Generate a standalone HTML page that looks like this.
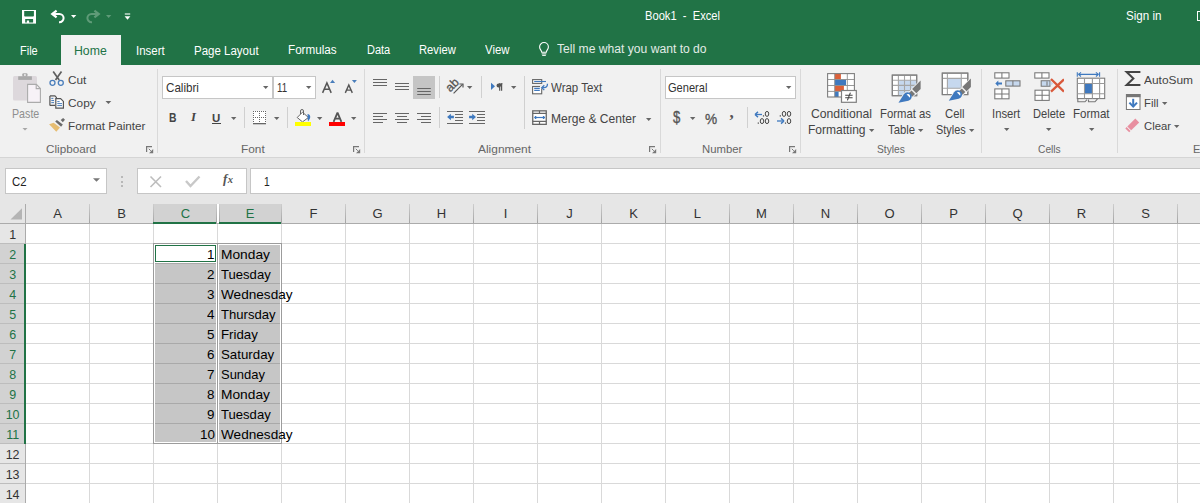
<!DOCTYPE html>
<html><head><meta charset="utf-8"><style>
html,body{margin:0;padding:0;width:1200px;height:503px;overflow:hidden;background:#fff}
body{position:relative;font-family:"Liberation Sans",sans-serif}
div,span,svg{position:absolute}
.t{white-space:pre;transform-origin:0 0;line-height:normal}
.hd{font-size:12.5px;line-height:16px}
.cell{font-size:13.5px;line-height:18px;color:#000}
</style></head><body>
<div style="left:0px;top:0px;width:1200px;height:65px;background:#217346"></div>
<div style="left:61px;top:35px;width:60px;height:30px;background:#f1f1f1"></div>
<span class="t" style="left:644.60px;top:8.20px;font-size:13.04px;color:#ffffff;transform:scaleX(0.8552)">Book1  -  Excel</span>
<span class="t" style="left:1126.10px;top:8.20px;font-size:13.04px;color:#ffffff;transform:scaleX(0.8897)">Sign in</span>
<span class="t" style="left:20.40px;top:43.89px;font-size:12.61px;color:#ffffff;transform:scaleX(0.8719)">File</span>
<span class="t" style="left:74.20px;top:43.89px;font-size:12.61px;color:#217346;transform:scaleX(0.9732)">Home</span>
<span class="t" style="left:136.00px;top:43.89px;font-size:12.61px;color:#ffffff;transform:scaleX(0.9079)">Insert</span>
<span class="t" style="left:194.40px;top:43.89px;font-size:12.61px;color:#ffffff;transform:scaleX(0.9124)">Page Layout</span>
<span class="t" style="left:288.30px;top:42.79px;font-size:12.61px;color:#ffffff;transform:scaleX(0.9257)">Formulas</span>
<span class="t" style="left:366.50px;top:42.79px;font-size:12.61px;color:#ffffff;transform:scaleX(0.8727)">Data</span>
<span class="t" style="left:419.20px;top:42.79px;font-size:12.61px;color:#ffffff;transform:scaleX(0.8889)">Review</span>
<span class="t" style="left:485.20px;top:42.79px;font-size:12.61px;color:#ffffff;transform:scaleX(0.9044)">View</span>
<span class="t" style="left:556.90px;top:42.29px;font-size:12.61px;color:#e3ece6;transform:scaleX(0.9614)">Tell me what you want to do</span>
<div style="left:0px;top:65px;width:1200px;height:92px;background:#f1f1f1"></div>
<div style="left:0px;top:157px;width:1200px;height:1px;background:#d5d5d5"></div>
<div style="left:157px;top:69px;width:1px;height:84px;background:#d9d9d9"></div>
<div style="left:364px;top:69px;width:1px;height:84px;background:#d9d9d9"></div>
<div style="left:660px;top:69px;width:1px;height:84px;background:#d9d9d9"></div>
<div style="left:800px;top:69px;width:1px;height:84px;background:#d9d9d9"></div>
<div style="left:981px;top:69px;width:1px;height:84px;background:#d9d9d9"></div>
<div style="left:1117px;top:69px;width:1px;height:84px;background:#d9d9d9"></div>
<svg style="position:absolute;left:20px;top:8px" width="18" height="18" viewBox="0 0 18 18"><rect x="2" y="2" width="14" height="13.6" fill="#fff"/><path d="M4.2 3 H13.9 V7.9 L13.2 8.5 H4.9 L4.2 7.9 Z" fill="#217346"/><path d="M5.2 10.9 H13.1 V14.6 H9.1 V12.5 H6.8 V14.6 H5.2 Z" fill="#217346"/></svg>
<svg style="position:absolute;left:48px;top:8px" width="20" height="18" viewBox="0 0 20 18"><path d="M4.2 5.9 H11.4 A4.2 4.2 0 0 1 11.4 14.3 H11" fill="none" stroke="#fff" stroke-width="2"/><path d="M8.6 2.6 L4.3 5.9 L8.6 9.3" fill="none" stroke="#fff" stroke-width="2.3"/></svg>
<svg style="position:absolute;left:68px;top:12px" width="10" height="8" viewBox="0 0 10 8"><path d="M3 3 H8.3 L5.65 6 Z" fill="#fff"/></svg>
<svg style="position:absolute;left:84px;top:8px" width="20" height="18" viewBox="0 0 20 18"><g transform="translate(19,0) scale(-1,1)"><path d="M4.2 5.9 H11.4 A4.2 4.2 0 0 1 11.4 14.3 H11" fill="none" stroke="#5f9b78" stroke-width="2"/><path d="M8.6 2.6 L4.3 5.9 L8.6 9.3" fill="none" stroke="#5f9b78" stroke-width="2.3"/></g></svg>
<svg style="position:absolute;left:104px;top:12px" width="10" height="8" viewBox="0 0 10 8"><path d="M2 3 H7.3 L4.65 6 Z" fill="#5f9b78"/></svg>
<svg style="position:absolute;left:122px;top:10px" width="12" height="12" viewBox="0 0 12 12"><path d="M2.8 4 H8.2" stroke="#fff" stroke-width="1.1"/><path d="M2.6 6.3 H8.4 L5.5 9.8 Z" fill="#fff"/></svg>
<div style="left:1197px;top:11px;width:3px;height:10px;border-left:1.2px solid #fff;border-top:1.2px solid #fff;border-bottom:1.2px solid #fff;box-sizing:border-box"></div>
<svg style="position:absolute;left:537px;top:40.5px" width="14" height="18" viewBox="0 0 14 18"><path d="M4.7 11.2 C4.7 9.6 2.6 8.4 2.6 5.9 A4.4 4.4 0 0 1 11.4 5.9 C11.4 8.4 9.3 9.6 9.3 11.2 Z" fill="none" stroke="#fff" stroke-width="1.1"/><path d="M4.7 12.9 H9.3 M5.2 14.4 H8.8" stroke="#fff" stroke-width="1"/></svg>
<svg style="position:absolute;left:10px;top:70px" width="34" height="36" viewBox="0 0 34 36"><rect x="3" y="6" width="24" height="24.6" rx="1.6" fill="#ddd8dc"/><rect x="8.2" y="6.3" width="13.7" height="3.6" fill="#a9a9a9"/><rect x="12.3" y="3.2" width="5.2" height="3.5" rx="1" fill="#a9a9a9"/><rect x="14" y="4.2" width="1.8" height="1.6" fill="#eee"/><path d="M17 13.9 H26.8 L31 18.2 V33 H17 Z" fill="#f1f1f1"/><path d="M17.6 14.4 H26.4 L30.4 18.5 V32.4 H17.6 Z" fill="#f7f2f7" stroke="#ababab" stroke-width="1.1"/><path d="M26.2 14.4 V18.6 H30.4" fill="none" stroke="#ababab" stroke-width="1.1"/></svg>
<svg style="position:absolute;left:46px;top:68px" width="20" height="20" viewBox="0 0 20 20"><path d="M7.2 3.4 L13.2 12 M15.5 3.4 L9.5 12" stroke="#606060" stroke-width="1.7"/><circle cx="6.5" cy="14.8" r="2.5" fill="none" stroke="#4a7ebb" stroke-width="1.3"/><circle cx="14.8" cy="14.8" r="2.5" fill="none" stroke="#4a7ebb" stroke-width="1.3"/></svg>
<svg style="position:absolute;left:46px;top:93px" width="20" height="18" viewBox="0 0 20 18"><path d="M3.9 2.9 H8.9 L10.4 4.4 V5.4 M9 12.4 H3.9 Z" fill="none" stroke="#555" stroke-width="1.2"/><path d="M3.9 2.9 V12.4" stroke="#555" stroke-width="1.2"/><path d="M5.3 5.4 H7.3 M5.3 7.5 H8 M5.3 9.6 H8" stroke="#4a7ebb" stroke-width="1"/><path d="M9.8 5.6 H14.6 L17.4 8.4 V15.2 H9.8 Z" fill="#fff" stroke="#555" stroke-width="1.2"/><path d="M11.3 8.6 H13.6 M11.3 10.6 H16 M11.3 12.6 H16" stroke="#4a7ebb" stroke-width="1"/></svg>
<svg style="position:absolute;left:48px;top:116px" width="19" height="18" viewBox="0 0 19 18"><path d="M1.1 8.3 L5.7 6.7 L12 11.6 L8.3 15.7 Z" fill="#e6bd72"/><path d="M7.2 5.4 L8.9 3.9 L14.8 8.5 L13.1 10.7 Z" fill="#6a6a6a"/><path d="M12.7 4.1 L15.1 1.9 L17 3.7 L14.8 6.3 Z" fill="#6a6a6a"/></svg>
<svg style="position:absolute;left:22px;top:126px" width="8" height="6" viewBox="0 0 8 6"><path d="M0.5 2 H5.5 L3 4.5 Z" fill="#a6a6a6"/></svg>
<svg style="position:absolute;left:105px;top:100px" width="8" height="6" viewBox="0 0 8 6"><path d="M0.5 1 H6.3 L3.4 4 Z" fill="#666"/></svg>
<svg style="position:absolute;left:146px;top:146px" width="8" height="8" viewBox="0 0 8 8"><path d="M0.6 6 V0.6 H6" fill="none" stroke="#777" stroke-width="1.2"/><path d="M2.8 2.8 L4.8 4.8" stroke="#777" stroke-width="1"/><path d="M3 7.2 H7.2 V3 Z" fill="#777"/></svg>
<svg style="position:absolute;left:353px;top:146px" width="8" height="8" viewBox="0 0 8 8"><path d="M0.6 6 V0.6 H6" fill="none" stroke="#777" stroke-width="1.2"/><path d="M2.8 2.8 L4.8 4.8" stroke="#777" stroke-width="1"/><path d="M3 7.2 H7.2 V3 Z" fill="#777"/></svg>
<svg style="position:absolute;left:649px;top:146px" width="8" height="8" viewBox="0 0 8 8"><path d="M0.6 6 V0.6 H6" fill="none" stroke="#777" stroke-width="1.2"/><path d="M2.8 2.8 L4.8 4.8" stroke="#777" stroke-width="1"/><path d="M3 7.2 H7.2 V3 Z" fill="#777"/></svg>
<svg style="position:absolute;left:789px;top:146px" width="8" height="8" viewBox="0 0 8 8"><path d="M0.6 6 V0.6 H6" fill="none" stroke="#777" stroke-width="1.2"/><path d="M2.8 2.8 L4.8 4.8" stroke="#777" stroke-width="1"/><path d="M3 7.2 H7.2 V3 Z" fill="#777"/></svg>
<span class="t" style="left:11.70px;top:106.65px;font-size:12.32px;color:#8f8f8f;transform:scaleX(0.8667)">Paste</span>
<span class="t" style="left:68.40px;top:74.21px;font-size:11.59px;color:#444444;transform:scaleX(1.0167)">Cut</span>
<span class="t" style="left:68.40px;top:97.31px;font-size:11.59px;color:#444444;transform:scaleX(1.0221)">Copy</span>
<span class="t" style="left:68.40px;top:120.11px;font-size:11.59px;color:#444444;transform:scaleX(1.0117)">Format Painter</span>
<span class="t" style="left:45.70px;top:142.87px;font-size:11.3px;color:#666666;transform:scaleX(1.0351)">Clipboard</span>
<span class="t" style="left:241.25px;top:142.57px;font-size:11.3px;color:#666666;transform:scaleX(1.0509)">Font</span>
<span class="t" style="left:478.25px;top:142.57px;font-size:11.3px;color:#666666;transform:scaleX(1.0558)">Alignment</span>
<span class="t" style="left:702.40px;top:142.57px;font-size:11.3px;color:#666666;transform:scaleX(1.0025)">Number</span>
<span class="t" style="left:876.60px;top:142.57px;font-size:11.3px;color:#666666;transform:scaleX(0.9058)">Styles</span>
<span class="t" style="left:1037.70px;top:142.67px;font-size:11.3px;color:#666666;transform:scaleX(0.9044)">Cells</span>
<div style="left:162px;top:76px;width:111px;height:23px;background:#fff;border:1px solid #c6c6c6;box-sizing:border-box"></div>
<div style="left:273px;top:76px;width:43px;height:23px;background:#fff;border:1px solid #c6c6c6;box-sizing:border-box"></div>
<span class="t" style="left:165.80px;top:80.33px;font-size:12.9px;color:#333333;transform:scaleX(0.9016)">Calibri</span>
<span class="t" style="left:276.80px;top:80.33px;font-size:12.9px;color:#333333;transform:scaleX(0.7537)">11</span>
<svg style="position:absolute;left:261.8px;top:85px" width="8" height="5" viewBox="0 0 8 5"><path d="M1 1 H6.4 L3.7 4 Z" fill="#666666"/></svg>
<svg style="position:absolute;left:305px;top:85px" width="8" height="5" viewBox="0 0 8 5"><path d="M1 1 H6.4 L3.7 4 Z" fill="#666666"/></svg>
<svg style="position:absolute;left:320px;top:78px" width="40" height="18" viewBox="0 0 40 18"><path d="M2.6 14.9 L6.9 4.9 L11.2 14.9 M4.3 11.2 H9.6" fill="none" stroke="#555" stroke-width="1.5"/><path d="M10 4.9 L12.55 1.8 L15.1 4.9 Z" fill="#4a7ebb"/><path d="M25.3 14.9 L28.8 7 L32.3 14.9 M26.6 12.1 H31" fill="none" stroke="#555" stroke-width="1.4"/><path d="M31.9 2 H36.9 L34.4 5.1 Z" fill="#4a7ebb"/></svg>
<span class="t" style="left:168.60px;top:110.62px;font-size:12.46px;color:#444;font-weight:bold;transform:scaleX(0.8333)">B</span>
<span class="t" style="left:191px;top:110px;font-size:12.8px;font-style:italic;color:#444;font-family:'Liberation Serif',serif;font-weight:bold">I</span>
<span class="t" style="left:212.30px;top:110.58px;font-size:11.74px;color:#444;font-weight:bold;transform:scaleX(0.9765)">U</span>
<div style="left:212px;top:122.5px;width:9px;height:1.3px;background:#444"></div>
<svg style="position:absolute;left:229.8px;top:116px" width="8" height="5" viewBox="0 0 8 5"><path d="M1 1 H6.4 L3.7 4 Z" fill="#666666"/></svg>
<div style="left:244px;top:107px;width:1px;height:21px;background:#d0d0d0"></div>
<svg style="position:absolute;left:248px;top:105px" width="24" height="24" viewBox="0 0 24 24"><rect x="5" y="6" width="13" height="13" fill="#fff"/><rect x="5.0" y="6.0" width="1" height="1" fill="#666"/><rect x="5.0" y="8.0" width="1" height="1" fill="#666"/><rect x="5.0" y="10.0" width="1" height="1" fill="#666"/><rect x="5.0" y="12.0" width="1" height="1" fill="#666"/><rect x="5.0" y="14.0" width="1" height="1" fill="#666"/><rect x="5.0" y="16.0" width="1" height="1" fill="#666"/><rect x="7.0" y="6.0" width="1" height="1" fill="#666"/><rect x="7.0" y="12.0" width="1" height="1" fill="#666"/><rect x="9.0" y="6.0" width="1" height="1" fill="#666"/><rect x="9.0" y="12.0" width="1" height="1" fill="#666"/><rect x="11.0" y="6.0" width="1" height="1" fill="#666"/><rect x="11.0" y="8.0" width="1" height="1" fill="#666"/><rect x="11.0" y="10.0" width="1" height="1" fill="#666"/><rect x="11.0" y="12.0" width="1" height="1" fill="#666"/><rect x="11.0" y="14.0" width="1" height="1" fill="#666"/><rect x="11.0" y="16.0" width="1" height="1" fill="#666"/><rect x="13.0" y="6.0" width="1" height="1" fill="#666"/><rect x="13.0" y="12.0" width="1" height="1" fill="#666"/><rect x="15.0" y="6.0" width="1" height="1" fill="#666"/><rect x="15.0" y="12.0" width="1" height="1" fill="#666"/><rect x="17.0" y="6.0" width="1" height="1" fill="#666"/><rect x="17.0" y="8.0" width="1" height="1" fill="#666"/><rect x="17.0" y="10.0" width="1" height="1" fill="#666"/><rect x="17.0" y="12.0" width="1" height="1" fill="#666"/><rect x="17.0" y="14.0" width="1" height="1" fill="#666"/><rect x="17.0" y="16.0" width="1" height="1" fill="#666"/><rect x="5" y="18" width="13" height="1.3" fill="#666"/></svg>
<svg style="position:absolute;left:272.8px;top:116px" width="8" height="5" viewBox="0 0 8 5"><path d="M1 1 H6.4 L3.7 4 Z" fill="#666666"/></svg>
<div style="left:287px;top:107px;width:1px;height:21px;background:#d0d0d0"></div>
<svg style="position:absolute;left:293px;top:108px" width="20" height="20" viewBox="0 0 20 20"><path d="M4.2 9.5 L9.5 4.2 L15.4 9.5 L9.5 13.9 Z" fill="#fff" stroke="#666" stroke-width="1"/><path d="M7.5 6 V3 A1.2 1.2 0 0 1 10.5 3 V7" fill="none" stroke="#666" stroke-width="1"/><path d="M14.5 6 C17.6 6.5 18.5 9.5 15 13.6 C14.5 11 14.8 8.5 14.5 6 Z" fill="#3f79bf"/><rect x="2" y="14" width="16" height="4" fill="#ffff00"/></svg>
<svg style="position:absolute;left:315.9px;top:116px" width="8" height="5" viewBox="0 0 8 5"><path d="M1 1 H6.4 L3.7 4 Z" fill="#666666"/></svg>
<svg style="position:absolute;left:327px;top:108px" width="20" height="20" viewBox="0 0 20 20"><path d="M6.6 13.9 L10.5 4.6 L14.4 13.9 M8 10.6 H13" fill="none" stroke="#555" stroke-width="1.8" stroke-linejoin="bevel"/><rect x="2" y="14" width="16" height="4" fill="#ff0000"/></svg>
<svg style="position:absolute;left:349.9px;top:116px" width="8" height="5" viewBox="0 0 8 5"><path d="M1 1 H6.4 L3.7 4 Z" fill="#666666"/></svg>
<svg style="position:absolute;left:370px;top:74px" width="70" height="56" viewBox="0 0 70 56"><path d="M3 5.5 H17 M3 8.5 H17 M3 11.5 H17" stroke="#666" stroke-width="1.1"/><path d="M25 9.5 H39 M25 12.5 H39 M25 15.5 H39" stroke="#666" stroke-width="1.1"/><rect x="43" y="2" width="22" height="23" fill="#c5c5c5"/><path d="M47.2 14.5 H60.8 M47.2 17.5 H60.8 M47.2 20.5 H60.8" stroke="#666" stroke-width="1.1"/><path d="M3 39.5 H17 M3 42.5 H13 M3 45.5 H17 M3 48.5 H13" stroke="#666" stroke-width="1.1"/><path d="M25 39.5 H39 M27 42.5 H37 M25 45.5 H39 M27 48.5 H37" stroke="#666" stroke-width="1.1"/><path d="M47 39.5 H61 M51 42.5 H61 M47 45.5 H61 M51 48.5 H61" stroke="#666" stroke-width="1.1"/></svg>
<div style="left:439px;top:76px;width:1px;height:22px;background:#d0d0d0"></div>
<div style="left:439px;top:107px;width:1px;height:21px;background:#d0d0d0"></div>
<div style="left:481px;top:76px;width:1px;height:22px;background:#d0d0d0"></div>
<svg style="position:absolute;left:444px;top:77px" width="22" height="18" viewBox="0 0 22 18"><g transform="rotate(-45 8 8)"><text x="1.5" y="12" font-family="Liberation Sans" font-size="12" fill="#555" stroke="#555" stroke-width="0.35">ab</text></g><path d="M9.6 16.3 L18.5 7.4" stroke="#555" stroke-width="1.2"/><path d="M15.4 7 H19 V10.6" fill="none" stroke="#555" stroke-width="1.2"/></svg>
<svg style="position:absolute;left:466px;top:85px" width="8" height="5" viewBox="0 0 8 5"><path d="M1 1 H6.4 L3.7 4 Z" fill="#666666"/></svg>
<svg style="position:absolute;left:488px;top:80px" width="18" height="14" viewBox="0 0 18 14"><path d="M3 2.8 L7 6.3 L3 9.9 Z" fill="#3f79bf"/><path d="M11.7 3.3 V10.8 M13.6 3.3 V10.8" stroke="#555" stroke-width="1.2"/><path d="M14.8 3.4 H10.6 A2.1 2.1 0 0 0 10.6 7.6 H11.8 Z" fill="#555"/></svg>
<svg style="position:absolute;left:509.9px;top:85px" width="8" height="5" viewBox="0 0 8 5"><path d="M1 1 H6.4 L3.7 4 Z" fill="#666666"/></svg>
<svg style="position:absolute;left:444px;top:106px" width="46" height="22" viewBox="0 0 46 22"><path d="M3 5.5 H19 M11 8.5 H19 M11 11.5 H19 M11 14.5 H19 M3 17.5 H19" stroke="#666" stroke-width="1.1"/><path d="M3.1 11 L6.9 7.7 V9.7 H9.9 V12.3 H6.9 V14.3 Z" fill="#3f79bf"/><path d="M25 5.5 H41 M33 8.5 H41 M33 11.5 H41 M33 14.5 H41 M25 17.5 H41" stroke="#666" stroke-width="1.1"/><path d="M32 11 L28.2 7.7 V9.7 H25.1 V12.3 H28.2 V14.3 Z" fill="#3f79bf"/></svg>
<div style="left:524px;top:76px;width:1px;height:53px;background:#d0d0d0"></div>
<svg style="position:absolute;left:530px;top:76px" width="20" height="20" viewBox="0 0 20 20"><rect x="2.6" y="3.6" width="9.1" height="3.8" fill="#fff" stroke="#666" stroke-width="1.1"/><rect x="2.6" y="10.5" width="9.1" height="7.3" fill="#fff" stroke="#666" stroke-width="1.1"/><rect x="10" y="9.8" width="2.5" height="2.6" fill="#f1f1f1"/><path d="M4.2 5.5 H16" stroke="#3f79bf" stroke-width="1.1"/><path d="M4.2 12.4 H9.8 M4.2 14.4 H9.8" stroke="#3f79bf" stroke-width="1.1"/><path d="M17.4 7.8 V8.6 A3.1 3.1 0 0 1 14.3 11.7 H12.2" fill="none" stroke="#3f79bf" stroke-width="1.3"/><path d="M14.3 9.3 L11.8 11.7 L14.3 14.1" fill="none" stroke="#3f79bf" stroke-width="1.3"/></svg>
<span class="t" style="left:551.25px;top:80.06px;font-size:12.75px;color:#444444;transform:scaleX(0.9007)">Wrap Text</span>
<svg style="position:absolute;left:530px;top:108px" width="20" height="20" viewBox="0 0 20 20"><rect x="2.75" y="2.85" width="13.5" height="13.5" fill="#fff" stroke="#666" stroke-width="1.3"/><path d="M2.75 5.4 H16.25 M2.75 13.4 H16.25 M9.5 2.85 V5.4 M9.5 13.4 V16.35" stroke="#666" stroke-width="1.2"/><path d="M4.2 9.5 H15" stroke="#3f79bf" stroke-width="1.2"/><path d="M5.6 7.9 V11.1 M13.6 7.9 V11.1" stroke="#3f79bf" stroke-width="1.4"/></svg>
<span class="t" style="left:551.25px;top:110.96px;font-size:12.75px;color:#444444;transform:scaleX(0.9444)">Merge &amp; Center</span>
<svg style="position:absolute;left:644.8px;top:117px" width="8" height="5" viewBox="0 0 8 5"><path d="M1 1 H6.4 L3.7 4 Z" fill="#666666"/></svg>
<div style="left:665px;top:76px;width:131px;height:23px;background:#fff;border:1px solid #c6c6c6;box-sizing:border-box"></div>
<span class="t" style="left:668.40px;top:80.13px;font-size:12.9px;color:#333333;transform:scaleX(0.8584)">General</span>
<svg style="position:absolute;left:784.7px;top:85px" width="8" height="5" viewBox="0 0 8 5"><path d="M1 1 H6.4 L3.7 4 Z" fill="#666666"/></svg>
<span class="t" style="left:673.00px;top:108.05px;font-size:16.52px;color:#555;-webkit-text-stroke:0.35px #555;transform:scaleX(0.7935)">$</span>
<svg style="position:absolute;left:688.9px;top:116px" width="8" height="5" viewBox="0 0 8 5"><path d="M1 1 H6.4 L3.7 4 Z" fill="#666666"/></svg>
<span class="t" style="left:704.50px;top:109.90px;font-size:15.36px;color:#555;-webkit-text-stroke:0.35px #555;transform:scaleX(0.8905)">%</span>
<span class="t" style="left:729.6px;top:103px;font-size:17px;font-weight:bold;color:#555;font-family:'Liberation Serif',serif">,</span>
<div style="left:747px;top:107px;width:1px;height:21px;background:#d0d0d0"></div>
<svg style="position:absolute;left:752px;top:108px" width="44" height="18" viewBox="0 0 44 18"><path d="M3.6 6.5 H10" stroke="#3f79bf" stroke-width="1.3"/><path d="M3 6.5 L6 3.9 M3 6.5 L6 9.1" stroke="#3f79bf" stroke-width="1.4" fill="none"/><path d="M25 13 H31.5" stroke="#3f79bf" stroke-width="1.3"/><path d="M32 13 L29 10.4 M32 13 L29 15.6" stroke="#3f79bf" stroke-width="1.4" fill="none"/></svg>
<svg style="position:absolute;left:752px;top:108px" width="44" height="18" viewBox="0 0 44 18"><rect x="10.9" y="7.300000000000001" width="1.2" height="1.2" fill="#444"/><ellipse cx="15" cy="5.9" rx="1.75" ry="2.5" fill="none" stroke="#444" stroke-width="1"/><rect x="5.7" y="14.5" width="1.2" height="1.2" fill="#444"/><ellipse cx="10" cy="13.1" rx="1.75" ry="2.5" fill="none" stroke="#444" stroke-width="1"/><ellipse cx="15" cy="13.1" rx="1.75" ry="2.5" fill="none" stroke="#444" stroke-width="1"/><rect x="27.7" y="7.300000000000001" width="1.2" height="1.2" fill="#444"/><ellipse cx="32" cy="5.9" rx="1.75" ry="2.5" fill="none" stroke="#444" stroke-width="1"/><ellipse cx="37" cy="5.9" rx="1.75" ry="2.5" fill="none" stroke="#444" stroke-width="1"/><rect x="32.9" y="14.5" width="1.2" height="1.2" fill="#444"/><ellipse cx="37" cy="13.1" rx="1.75" ry="2.5" fill="none" stroke="#444" stroke-width="1"/></svg>
<svg style="position:absolute;left:826px;top:72px" width="34" height="34" viewBox="0 0 34 34"><rect x="1.6" y="1.6" width="26.8" height="23.4" fill="#fff"/><rect x="8.7" y="1.6" width="6.2" height="5.9" fill="#dd6038"/><rect x="8.7" y="7.5" width="11.3" height="6" fill="#3f79bf"/><rect x="8.7" y="13.5" width="9.2" height="5.9" fill="#dd6038"/><rect x="8.7" y="19.4" width="3.9" height="5.6" fill="#3f79bf"/><path d="M8.7 1.6 V25 M21.3 1.6 V25 M1.6 7.5 H28.4 M1.6 13.5 H28.4 M1.6 19.4 H28.4" stroke="#8f8f8f" stroke-width="0.9"/><rect x="1.6" y="1.6" width="26.8" height="23.4" fill="none" stroke="#7f7f7f" stroke-width="1.1"/><rect x="15.5" y="18.5" width="14.8" height="11.8" fill="#fff" stroke="#7f7f7f" stroke-width="1.2"/><path d="M19.2 23.2 H26.6 M19.2 25.8 H26.6 M24.4 20.6 L21.4 28.4" stroke="#444" stroke-width="1.1"/></svg>
<span class="t" style="left:810.50px;top:106.62px;font-size:12.46px;color:#444444;transform:scaleX(0.9791)">Conditional</span>
<span class="t" style="left:807.80px;top:122.62px;font-size:12.46px;color:#444444;transform:scaleX(0.9664)">Formatting</span>
<svg style="position:absolute;left:868px;top:128px" width="8" height="5" viewBox="0 0 8 5"><path d="M1 1 H6.4 L3.7 4 Z" fill="#666666"/></svg>
<svg style="position:absolute;left:888px;top:70px" width="36" height="36" viewBox="0 0 36 36"><rect x="4.3" y="5.1" width="24.4" height="20.6" fill="#fff" stroke="#7f7f7f" stroke-width="1.1"/><rect x="10.4" y="10.3" width="18.3" height="15.4" fill="#c6d8ee"/><path d="M10.4 5.1 V25.7 M16.5 5.1 V25.7 M22.5 5.1 V25.7 M4.3 10.3 H28.7 M4.3 15.4 H28.7 M4.3 20.5 H28.7" stroke="#a6a6a6" stroke-width="1.1"/><rect x="4.3" y="5.1" width="24.4" height="20.6" fill="none" stroke="#7f7f7f" stroke-width="1.1"/><path d="M32.60 10.60 L32.60 19.00 L28.30 23.30 L24.10 19.10 Z M23.50 20.50 L27.00 24.00 L24.20 26.80 L20.70 23.30 Z M15.85 24.20 A4.3 4.3 0 1 1 20.40 30.70 L10.50 32.80 Z" fill="#f1f1f1" stroke="#f1f1f1" stroke-width="1.6"/><path d="M32.60 10.60 L32.60 19.00 L28.30 23.30 L24.10 19.10 Z" fill="#777"/><path d="M23.50 20.50 L27.00 24.00 L24.20 26.80 L20.70 23.30 Z" fill="#777"/><path d="M15.85 24.20 A4.3 4.3 0 1 1 20.40 30.70 L10.50 32.80 Z" fill="#3f79bf"/><path d="M18.50 24.60 C20.50 23.20 23.00 24.80 21.80 27.80 C20.80 26.60 19.80 25.60 18.50 24.60 Z" fill="#fff"/></svg>
<span class="t" style="left:879.60px;top:106.62px;font-size:12.46px;color:#444444;transform:scaleX(0.9091)">Format as</span>
<span class="t" style="left:887.90px;top:122.62px;font-size:12.46px;color:#444444;transform:scaleX(0.9060)">Table</span>
<svg style="position:absolute;left:916.8px;top:128px" width="8" height="5" viewBox="0 0 8 5"><path d="M1 1 H6.4 L3.7 4 Z" fill="#666666"/></svg>
<svg style="position:absolute;left:938px;top:70px" width="36" height="36" viewBox="0 0 36 36"><rect x="4.3" y="3.1" width="25.5" height="21.5" fill="#fff" stroke="#7f7f7f" stroke-width="1.1"/><rect x="9.4" y="8.4" width="13.9" height="9.9" fill="#c6d8ee"/><path d="M9.4 3.1 V24.6 M23.3 3.1 V24.6 M4.3 8.4 H29.8 M4.3 18.3 H29.8" stroke="#a6a6a6" stroke-width="1.1"/><rect x="4.3" y="3.1" width="25.5" height="21.5" fill="none" stroke="#7f7f7f" stroke-width="1.1"/><path d="M32.90 8.60 L32.90 17.00 L28.60 21.30 L24.40 17.10 Z M23.80 18.50 L27.30 22.00 L24.50 24.80 L21.00 21.30 Z M16.15 22.20 A4.3 4.3 0 1 1 20.70 28.70 L10.80 30.80 Z" fill="#f1f1f1" stroke="#f1f1f1" stroke-width="1.6"/><path d="M32.90 8.60 L32.90 17.00 L28.60 21.30 L24.40 17.10 Z" fill="#777"/><path d="M23.80 18.50 L27.30 22.00 L24.50 24.80 L21.00 21.30 Z" fill="#777"/><path d="M16.15 22.20 A4.3 4.3 0 1 1 20.70 28.70 L10.80 30.80 Z" fill="#3f79bf"/><path d="M18.80 22.60 C20.80 21.20 23.30 22.80 22.10 25.80 C21.10 24.60 20.10 23.60 18.80 22.60 Z" fill="#fff"/></svg>
<span class="t" style="left:945.10px;top:106.62px;font-size:12.46px;color:#444444;transform:scaleX(0.9070)">Cell</span>
<span class="t" style="left:936.30px;top:122.62px;font-size:12.46px;color:#444444;transform:scaleX(0.8732)">Styles</span>
<svg style="position:absolute;left:967.7px;top:128px" width="8" height="5" viewBox="0 0 8 5"><path d="M1 1 H6.4 L3.7 4 Z" fill="#666666"/></svg>
<svg style="position:absolute;left:990px;top:69px" width="34" height="34" viewBox="0 0 34 34"><g fill="#fff" stroke="#777" stroke-width="1.05"><rect x="4.8" y="3.8" width="14.2" height="5.3"/><rect x="15.8" y="11.8" width="14.2" height="5.3" fill="#c6d8ee"/><rect x="4.8" y="19.9" width="14.2" height="9.9"/></g><path d="M11.9 3.8 V9.1 M22.9 11.8 V17.1 M11.9 19.9 V29.8 M4.8 24.9 H19" stroke="#777" stroke-width="1.05"/><path d="M5.3 14.5 L8.3 11.5 V13.5 H12 V15.5 H8.3 V17.5 Z" fill="#3f79bf"/></svg>
<span class="t" style="left:992.40px;top:106.62px;font-size:12.46px;color:#444444;transform:scaleX(0.9071)">Insert</span>
<svg style="position:absolute;left:1003.3px;top:127.30000000000001px" width="8" height="5" viewBox="0 0 8 5"><path d="M1 1 H6.4 L3.7 4 Z" fill="#666666"/></svg>
<svg style="position:absolute;left:1030px;top:69px" width="34" height="34" viewBox="0 0 34 34"><g fill="#fff" stroke="#777" stroke-width="1.05"><rect x="4.8" y="3.8" width="14.2" height="5.3"/><rect x="5" y="21.2" width="14.2" height="10.2"/></g><path d="M11.9 3.8 V9.1 M12.1 21.2 V31.4 M5 26.3 H19.2" stroke="#777" stroke-width="1.05"/><path d="M11.2 11.8 H20 V17.2 H11.2 Z M17 12.4 V16.6" fill="#c6d8ee" stroke="#777" stroke-width="1.05"/><path d="M20.6 12.2 L23.3 14.5 L20.6 16.8 Z" fill="#c6d8ee"/><path d="M21 10 L34 22.6 M34 10.3 L21 22.6" stroke="#d9583a" stroke-width="2.3"/></svg>
<span class="t" style="left:1032.60px;top:106.62px;font-size:12.46px;color:#444444;transform:scaleX(0.8917)">Delete</span>
<svg style="position:absolute;left:1044.8px;top:127.30000000000001px" width="8" height="5" viewBox="0 0 8 5"><path d="M1 1 H6.4 L3.7 4 Z" fill="#666666"/></svg>
<svg style="position:absolute;left:1072px;top:69px" width="36" height="36" viewBox="0 0 36 36"><path d="M5.3 3.2 V7.7 M27.6 3.2 V7.7 M6.3 5.4 H26.6" stroke="#3f79bf" stroke-width="1.1"/><path d="M6.5 5.4 L9 3.3 M6.5 5.4 L9 7.5 M26.4 5.4 L23.9 3.3 M26.4 5.4 L23.9 7.5" stroke="#3f79bf" stroke-width="1.1" fill="none"/><rect x="5.3" y="9.2" width="27.4" height="20.4" fill="#fff" stroke="#777" stroke-width="1.05"/><rect x="12.5" y="14.5" width="7.9" height="10.2" fill="#3f79bf"/><path d="M12.5 9.2 V29.6 M20.4 9.2 V29.6 M27.6 9.2 V29.6 M5.3 14.5 H32.7 M5.3 24.7 H32.7" stroke="#999" stroke-width="1.1"/><path d="M5.8 29.6 V32.8 H13 L15 30.6 M16.5 30.6 V32.8 H23 L25.5 29.8" fill="none" stroke="#777" stroke-width="1.1"/></svg>
<span class="t" style="left:1072.90px;top:106.62px;font-size:12.46px;color:#444444;transform:scaleX(0.9266)">Format</span>
<svg style="position:absolute;left:1088.3px;top:127.30000000000001px" width="8" height="5" viewBox="0 0 8 5"><path d="M1 1 H6.4 L3.7 4 Z" fill="#666666"/></svg>
<svg style="position:absolute;left:1122px;top:68px" width="22" height="22" viewBox="0 0 22 22"><path d="M18.4 3.9 H4.6 L11.4 10.5 L4.6 17.1 H18.4" fill="none" stroke="#444" stroke-width="2"/></svg>
<span class="t" style="left:1144.30px;top:74.21px;font-size:11.59px;color:#444444;transform:scaleX(1.0294)">AutoSum</span>
<svg style="position:absolute;left:1122px;top:91px" width="22" height="22" viewBox="0 0 22 22"><rect x="4.4" y="3.5" width="13.6" height="15" fill="#fff" stroke="#777" stroke-width="1"/><rect x="4" y="3" width="14.4" height="3.2" fill="#777"/><path d="M11.2 7.8 V15.6" stroke="#3f79bf" stroke-width="2"/><path d="M7.4 11.6 L11.2 15.6 L15 11.6" fill="none" stroke="#3f79bf" stroke-width="2.1"/></svg>
<span class="t" style="left:1144.30px;top:97.31px;font-size:11.59px;color:#444444;transform:scaleX(0.9730)">Fill</span>
<svg style="position:absolute;left:1160.9px;top:100.5px" width="8" height="5" viewBox="0 0 8 5"><path d="M1 1 H6.4 L3.7 4 Z" fill="#666666"/></svg>
<svg style="position:absolute;left:1122px;top:115px" width="22" height="20" viewBox="0 0 22 20"><path d="M13.3 3.5 L17.2 7.4 L9.2 15.3 L5.3 11.4 Z" fill="#e88fa0"/><path d="M4.6 12.1 L8.5 16 L7.2 17.3 L3.3 13.4 Z" fill="#e88fa0"/></svg>
<span class="t" style="left:1144.30px;top:120.11px;font-size:11.59px;color:#444444;transform:scaleX(0.9747)">Clear</span>
<svg style="position:absolute;left:1173.2px;top:123.5px" width="8" height="5" viewBox="0 0 8 5"><path d="M1 1 H6.4 L3.7 4 Z" fill="#666666"/></svg>
<span class="t" style="left:1193.00px;top:142.67px;font-size:11.3px;color:#666666;transform:scaleX(0.9827)">Editing</span>
<div style="left:0px;top:158px;width:1200px;height:46px;background:#e6e6e6"></div>
<div style="left:5px;top:168px;width:102px;height:26px;background:#fff;border:1px solid #c6c6c6;box-sizing:border-box"></div>
<span class="t" style="left:12.40px;top:174.36px;font-size:13.19px;color:#222222;transform:scaleX(0.8639)">C2</span>
<svg style="position:absolute;left:92px;top:177px" width="10" height="6" viewBox="0 0 10 6"><path d="M1 1.3 L8 1.3 L4.5 4.8 Z" fill="#777"/></svg>
<div style="left:121px;top:176px;width:2px;height:2px;background:#a8a8a8;border-radius:1px"></div>
<div style="left:121px;top:180.5px;width:2px;height:2px;background:#a8a8a8;border-radius:1px"></div>
<div style="left:121px;top:185px;width:2px;height:2px;background:#a8a8a8;border-radius:1px"></div>
<div style="left:137px;top:168px;width:110px;height:26px;background:#fff;border:1px solid #c6c6c6;box-sizing:border-box"></div>
<svg style="position:absolute;left:148px;top:174px" width="16" height="15" viewBox="0 0 16 15"><path d="M2.5 2.5 L13 13 M13 2.5 L2.5 13" stroke="#bdbdbd" stroke-width="1.6"/></svg>
<svg style="position:absolute;left:184px;top:174px" width="17" height="15" viewBox="0 0 17 15"><path d="M2 7 L6.5 12 L15.5 2.5" stroke="#c8c8c8" stroke-width="2.4" fill="none"/></svg>
<span class="t" style="left:223px;top:171px;font-family:'Liberation Serif',serif;font-style:italic;font-weight:bold;font-size:13px;color:#555">f<span style="position:relative;font-size:10.5px;left:0.5px">x</span></span>
<div style="left:250px;top:168px;width:960px;height:26px;background:#fff;border:1px solid #c6c6c6;box-sizing:border-box"></div>
<span class="t" style="left:263.50px;top:174.10px;font-size:13.48px;color:#222222;transform:scaleX(0.7600)">1</span>
<div style="left:0px;top:204px;width:1200px;height:299px;background:#ffffff"></div>
<div style="left:0px;top:204px;width:1200px;height:19px;background:#e6e6e6"></div>
<div style="left:0px;top:224px;width:25px;height:279px;background:#e6e6e6"></div>
<div style="left:153px;top:204px;width:63px;height:19px;background:#d2d2d2"></div>
<div style="left:219px;top:204px;width:62px;height:19px;background:#d2d2d2"></div>
<div style="left:0px;top:244px;width:25px;height:199px;background:#d2d2d2"></div>
<div style="left:26px;top:243px;width:1174px;height:1px;background:#d9d9d9"></div>
<div style="left:0px;top:243px;width:25px;height:1px;background:#bdbdbd"></div>
<div style="left:26px;top:263px;width:1174px;height:1px;background:#d9d9d9"></div>
<div style="left:0px;top:263px;width:25px;height:1px;background:#bdbdbd"></div>
<div style="left:26px;top:283px;width:1174px;height:1px;background:#d9d9d9"></div>
<div style="left:0px;top:283px;width:25px;height:1px;background:#bdbdbd"></div>
<div style="left:26px;top:303px;width:1174px;height:1px;background:#d9d9d9"></div>
<div style="left:0px;top:303px;width:25px;height:1px;background:#bdbdbd"></div>
<div style="left:26px;top:323px;width:1174px;height:1px;background:#d9d9d9"></div>
<div style="left:0px;top:323px;width:25px;height:1px;background:#bdbdbd"></div>
<div style="left:26px;top:343px;width:1174px;height:1px;background:#d9d9d9"></div>
<div style="left:0px;top:343px;width:25px;height:1px;background:#bdbdbd"></div>
<div style="left:26px;top:363px;width:1174px;height:1px;background:#d9d9d9"></div>
<div style="left:0px;top:363px;width:25px;height:1px;background:#bdbdbd"></div>
<div style="left:26px;top:383px;width:1174px;height:1px;background:#d9d9d9"></div>
<div style="left:0px;top:383px;width:25px;height:1px;background:#bdbdbd"></div>
<div style="left:26px;top:403px;width:1174px;height:1px;background:#d9d9d9"></div>
<div style="left:0px;top:403px;width:25px;height:1px;background:#bdbdbd"></div>
<div style="left:26px;top:423px;width:1174px;height:1px;background:#d9d9d9"></div>
<div style="left:0px;top:423px;width:25px;height:1px;background:#bdbdbd"></div>
<div style="left:26px;top:443px;width:1174px;height:1px;background:#d9d9d9"></div>
<div style="left:0px;top:443px;width:25px;height:1px;background:#bdbdbd"></div>
<div style="left:26px;top:463px;width:1174px;height:1px;background:#d9d9d9"></div>
<div style="left:0px;top:463px;width:25px;height:1px;background:#bdbdbd"></div>
<div style="left:26px;top:483px;width:1174px;height:1px;background:#d9d9d9"></div>
<div style="left:0px;top:483px;width:25px;height:1px;background:#bdbdbd"></div>
<div style="left:89px;top:224px;width:1px;height:279px;background:#d9d9d9"></div>
<div style="left:153px;top:224px;width:1px;height:279px;background:#d9d9d9"></div>
<div style="left:217px;top:224px;width:1px;height:279px;background:#d9d9d9"></div>
<div style="left:281px;top:224px;width:1px;height:279px;background:#d9d9d9"></div>
<div style="left:345px;top:224px;width:1px;height:279px;background:#d9d9d9"></div>
<div style="left:409px;top:224px;width:1px;height:279px;background:#d9d9d9"></div>
<div style="left:473px;top:224px;width:1px;height:279px;background:#d9d9d9"></div>
<div style="left:537px;top:224px;width:1px;height:279px;background:#d9d9d9"></div>
<div style="left:601px;top:224px;width:1px;height:279px;background:#d9d9d9"></div>
<div style="left:665px;top:224px;width:1px;height:279px;background:#d9d9d9"></div>
<div style="left:729px;top:224px;width:1px;height:279px;background:#d9d9d9"></div>
<div style="left:793px;top:224px;width:1px;height:279px;background:#d9d9d9"></div>
<div style="left:857px;top:224px;width:1px;height:279px;background:#d9d9d9"></div>
<div style="left:921px;top:224px;width:1px;height:279px;background:#d9d9d9"></div>
<div style="left:985px;top:224px;width:1px;height:279px;background:#d9d9d9"></div>
<div style="left:1049px;top:224px;width:1px;height:279px;background:#d9d9d9"></div>
<div style="left:1113px;top:224px;width:1px;height:279px;background:#d9d9d9"></div>
<div style="left:1177px;top:224px;width:1px;height:279px;background:#d9d9d9"></div>
<div style="left:25px;top:204px;width:1px;height:299px;background:#ababab"></div>
<div style="left:89px;top:204px;width:1px;height:19px;background:linear-gradient(#cdcdcd,#a4a4a4)"></div>
<div style="left:153px;top:204px;width:1px;height:19px;background:linear-gradient(#cdcdcd,#a4a4a4)"></div>
<div style="left:216px;top:204px;width:1px;height:19px;background:linear-gradient(#cdcdcd,#a4a4a4)"></div>
<div style="left:219px;top:204px;width:1px;height:19px;background:linear-gradient(#cdcdcd,#a4a4a4)"></div>
<div style="left:281px;top:204px;width:1px;height:19px;background:linear-gradient(#cdcdcd,#a4a4a4)"></div>
<div style="left:345px;top:204px;width:1px;height:19px;background:linear-gradient(#cdcdcd,#a4a4a4)"></div>
<div style="left:409px;top:204px;width:1px;height:19px;background:linear-gradient(#cdcdcd,#a4a4a4)"></div>
<div style="left:473px;top:204px;width:1px;height:19px;background:linear-gradient(#cdcdcd,#a4a4a4)"></div>
<div style="left:537px;top:204px;width:1px;height:19px;background:linear-gradient(#cdcdcd,#a4a4a4)"></div>
<div style="left:601px;top:204px;width:1px;height:19px;background:linear-gradient(#cdcdcd,#a4a4a4)"></div>
<div style="left:665px;top:204px;width:1px;height:19px;background:linear-gradient(#cdcdcd,#a4a4a4)"></div>
<div style="left:729px;top:204px;width:1px;height:19px;background:linear-gradient(#cdcdcd,#a4a4a4)"></div>
<div style="left:793px;top:204px;width:1px;height:19px;background:linear-gradient(#cdcdcd,#a4a4a4)"></div>
<div style="left:857px;top:204px;width:1px;height:19px;background:linear-gradient(#cdcdcd,#a4a4a4)"></div>
<div style="left:921px;top:204px;width:1px;height:19px;background:linear-gradient(#cdcdcd,#a4a4a4)"></div>
<div style="left:985px;top:204px;width:1px;height:19px;background:linear-gradient(#cdcdcd,#a4a4a4)"></div>
<div style="left:1049px;top:204px;width:1px;height:19px;background:linear-gradient(#cdcdcd,#a4a4a4)"></div>
<div style="left:1113px;top:204px;width:1px;height:19px;background:linear-gradient(#cdcdcd,#a4a4a4)"></div>
<div style="left:1177px;top:204px;width:1px;height:19px;background:linear-gradient(#cdcdcd,#a4a4a4)"></div>
<div style="left:217px;top:204px;width:2px;height:19px;background:#ffffff"></div>
<div style="left:0px;top:223px;width:1200px;height:1px;background:#ababab"></div>
<div style="left:153px;top:222px;width:63px;height:2px;background:#217346"></div>
<div style="left:219px;top:222px;width:62px;height:2px;background:#217346"></div>
<div style="left:24px;top:244px;width:2px;height:200px;background:#217346"></div>
<svg style="position:absolute;left:0px;top:204px" width="25" height="19" viewBox="0 0 25 19"><path d="M10.5 15.6 L22 4.2 L22 15.6 Z" fill="#b4b4b4"/></svg>
<div style="left:155px;top:264px;width:61px;height:178px;background:#c6c6c6"></div>
<div style="left:219px;top:245px;width:61px;height:197px;background:#c6c6c6"></div>
<div style="left:219px;top:244px;width:61px;height:1px;background:#fff"></div>
<div style="left:155px;top:263px;width:61px;height:1px;background:#a9a9a9"></div>
<div style="left:219px;top:263px;width:61px;height:1px;background:#a9a9a9"></div>
<div style="left:155px;top:283px;width:61px;height:1px;background:#a9a9a9"></div>
<div style="left:219px;top:283px;width:61px;height:1px;background:#a9a9a9"></div>
<div style="left:155px;top:303px;width:61px;height:1px;background:#a9a9a9"></div>
<div style="left:219px;top:303px;width:61px;height:1px;background:#a9a9a9"></div>
<div style="left:155px;top:323px;width:61px;height:1px;background:#a9a9a9"></div>
<div style="left:219px;top:323px;width:61px;height:1px;background:#a9a9a9"></div>
<div style="left:155px;top:343px;width:61px;height:1px;background:#a9a9a9"></div>
<div style="left:219px;top:343px;width:61px;height:1px;background:#a9a9a9"></div>
<div style="left:155px;top:363px;width:61px;height:1px;background:#a9a9a9"></div>
<div style="left:219px;top:363px;width:61px;height:1px;background:#a9a9a9"></div>
<div style="left:155px;top:383px;width:61px;height:1px;background:#a9a9a9"></div>
<div style="left:219px;top:383px;width:61px;height:1px;background:#a9a9a9"></div>
<div style="left:155px;top:403px;width:61px;height:1px;background:#a9a9a9"></div>
<div style="left:219px;top:403px;width:61px;height:1px;background:#a9a9a9"></div>
<div style="left:155px;top:423px;width:61px;height:1px;background:#a9a9a9"></div>
<div style="left:219px;top:423px;width:61px;height:1px;background:#a9a9a9"></div>
<div style="left:154px;top:244px;width:1px;height:198px;background:#fff"></div>
<div style="left:216px;top:244px;width:1px;height:198px;background:#fff"></div>
<div style="left:218px;top:244px;width:1px;height:198px;background:#fff"></div>
<div style="left:280px;top:244px;width:1px;height:198px;background:#fff"></div>
<div style="left:154px;top:442px;width:127px;height:1px;background:#fff"></div>
<div style="left:153px;top:243px;width:129px;height:1px;background:#9c9c9c"></div>
<div style="left:153px;top:443px;width:129px;height:1px;background:#9c9c9c"></div>
<div style="left:153px;top:243px;width:1px;height:201px;background:#9c9c9c"></div>
<div style="left:217px;top:243px;width:1px;height:201px;background:#9c9c9c"></div>
<div style="left:281px;top:243px;width:1px;height:201px;background:#9c9c9c"></div>
<div style="left:155px;top:245px;width:61px;height:17px;border:1px solid #217346;box-sizing:border-box;background:#fff"></div>
<span class="t" style="left:53.15px;top:206.20px;font-size:13.04px;color:#333333;transform:scaleX(1.0000)">A</span>
<span class="t" style="left:117.15px;top:206.20px;font-size:13.04px;color:#333333;transform:scaleX(1.0000)">B</span>
<span class="t" style="left:180.80px;top:206.20px;font-size:13.04px;color:#217346;transform:scaleX(1.0000)">C</span>
<span class="t" style="left:245.65px;top:206.20px;font-size:13.04px;color:#217346;transform:scaleX(1.0000)">E</span>
<span class="t" style="left:309.50px;top:206.20px;font-size:13.04px;color:#333333;transform:scaleX(1.0000)">F</span>
<span class="t" style="left:372.45px;top:206.20px;font-size:13.04px;color:#333333;transform:scaleX(1.0000)">G</span>
<span class="t" style="left:436.80px;top:206.20px;font-size:13.04px;color:#333333;transform:scaleX(1.0000)">H</span>
<span class="t" style="left:503.70px;top:206.20px;font-size:13.04px;color:#333333;transform:scaleX(1.0000)">I</span>
<span class="t" style="left:566.25px;top:206.20px;font-size:13.04px;color:#333333;transform:scaleX(1.0000)">J</span>
<span class="t" style="left:629.15px;top:206.20px;font-size:13.04px;color:#333333;transform:scaleX(1.0000)">K</span>
<span class="t" style="left:693.85px;top:206.20px;font-size:13.04px;color:#333333;transform:scaleX(1.0000)">L</span>
<span class="t" style="left:756.05px;top:206.20px;font-size:13.04px;color:#333333;transform:scaleX(1.0000)">M</span>
<span class="t" style="left:820.80px;top:206.20px;font-size:13.04px;color:#333333;transform:scaleX(1.0000)">N</span>
<span class="t" style="left:884.45px;top:206.20px;font-size:13.04px;color:#333333;transform:scaleX(1.0000)">O</span>
<span class="t" style="left:949.15px;top:206.20px;font-size:13.04px;color:#333333;transform:scaleX(1.0000)">P</span>
<span class="t" style="left:1012.45px;top:206.20px;font-size:13.04px;color:#333333;transform:scaleX(1.0000)">Q</span>
<span class="t" style="left:1076.80px;top:206.20px;font-size:13.04px;color:#333333;transform:scaleX(1.0000)">R</span>
<span class="t" style="left:1141.15px;top:206.20px;font-size:13.04px;color:#333333;transform:scaleX(1.0000)">S</span>
<span class="t" style="left:9.15px;top:227.72px;font-size:12.46px;color:#333333;transform:scaleX(1.0000)">1</span>
<span class="t" style="left:9.15px;top:247.72px;font-size:12.46px;color:#217346;transform:scaleX(1.0000)">2</span>
<span class="t" style="left:9.15px;top:267.72px;font-size:12.46px;color:#217346;transform:scaleX(1.0000)">3</span>
<span class="t" style="left:9.15px;top:287.72px;font-size:12.46px;color:#217346;transform:scaleX(1.0000)">4</span>
<span class="t" style="left:9.15px;top:307.72px;font-size:12.46px;color:#217346;transform:scaleX(1.0000)">5</span>
<span class="t" style="left:9.15px;top:327.72px;font-size:12.46px;color:#217346;transform:scaleX(1.0000)">6</span>
<span class="t" style="left:9.15px;top:347.72px;font-size:12.46px;color:#217346;transform:scaleX(1.0000)">7</span>
<span class="t" style="left:9.15px;top:367.72px;font-size:12.46px;color:#217346;transform:scaleX(1.0000)">8</span>
<span class="t" style="left:9.15px;top:387.72px;font-size:12.46px;color:#217346;transform:scaleX(1.0000)">9</span>
<span class="t" style="left:5.65px;top:407.72px;font-size:12.46px;color:#217346;transform:scaleX(1.0000)">10</span>
<span class="t" style="left:6.15px;top:427.72px;font-size:12.46px;color:#217346;transform:scaleX(1.0000)">11</span>
<span class="t" style="left:5.65px;top:447.72px;font-size:12.46px;color:#333333;transform:scaleX(1.0000)">12</span>
<span class="t" style="left:5.65px;top:467.72px;font-size:12.46px;color:#333333;transform:scaleX(1.0000)">13</span>
<span class="t" style="left:5.65px;top:487.72px;font-size:12.46px;color:#333333;transform:scaleX(1.0000)">14</span>
<span class="t" style="left:207.08px;top:247.20px;font-size:13.04px;color:#000000;transform:scaleX(1.0300)">1</span>
<span class="t" style="left:220.60px;top:247.20px;font-size:13.04px;color:#000000;transform:scaleX(1.0560)">Monday</span>
<span class="t" style="left:207.08px;top:267.20px;font-size:13.04px;color:#000000;transform:scaleX(1.0300)">2</span>
<span class="t" style="left:220.60px;top:267.20px;font-size:13.04px;color:#000000;transform:scaleX(1.0040)">Tuesday</span>
<span class="t" style="left:207.08px;top:287.20px;font-size:13.04px;color:#000000;transform:scaleX(1.0300)">3</span>
<span class="t" style="left:220.60px;top:287.20px;font-size:13.04px;color:#000000;transform:scaleX(1.0437)">Wednesday</span>
<span class="t" style="left:207.08px;top:307.20px;font-size:13.04px;color:#000000;transform:scaleX(1.0300)">4</span>
<span class="t" style="left:220.60px;top:307.20px;font-size:13.04px;color:#000000;transform:scaleX(1.0037)">Thursday</span>
<span class="t" style="left:207.08px;top:327.20px;font-size:13.04px;color:#000000;transform:scaleX(1.0300)">5</span>
<span class="t" style="left:220.60px;top:327.20px;font-size:13.04px;color:#000000;transform:scaleX(1.0166)">Friday</span>
<span class="t" style="left:207.08px;top:347.20px;font-size:13.04px;color:#000000;transform:scaleX(1.0300)">6</span>
<span class="t" style="left:220.60px;top:347.20px;font-size:13.04px;color:#000000;transform:scaleX(1.0192)">Saturday</span>
<span class="t" style="left:207.08px;top:367.20px;font-size:13.04px;color:#000000;transform:scaleX(1.0300)">7</span>
<span class="t" style="left:220.60px;top:367.20px;font-size:13.04px;color:#000000;transform:scaleX(0.9955)">Sunday</span>
<span class="t" style="left:207.08px;top:387.20px;font-size:13.04px;color:#000000;transform:scaleX(1.0300)">8</span>
<span class="t" style="left:220.60px;top:387.20px;font-size:13.04px;color:#000000;transform:scaleX(1.0560)">Monday</span>
<span class="t" style="left:207.08px;top:407.20px;font-size:13.04px;color:#000000;transform:scaleX(1.0300)">9</span>
<span class="t" style="left:220.60px;top:407.20px;font-size:13.04px;color:#000000;transform:scaleX(1.0040)">Tuesday</span>
<span class="t" style="left:199.66px;top:427.20px;font-size:13.04px;color:#000000;transform:scaleX(1.0300)">10</span>
<span class="t" style="left:220.60px;top:427.20px;font-size:13.04px;color:#000000;transform:scaleX(1.0437)">Wednesday</span>
</body></html>
